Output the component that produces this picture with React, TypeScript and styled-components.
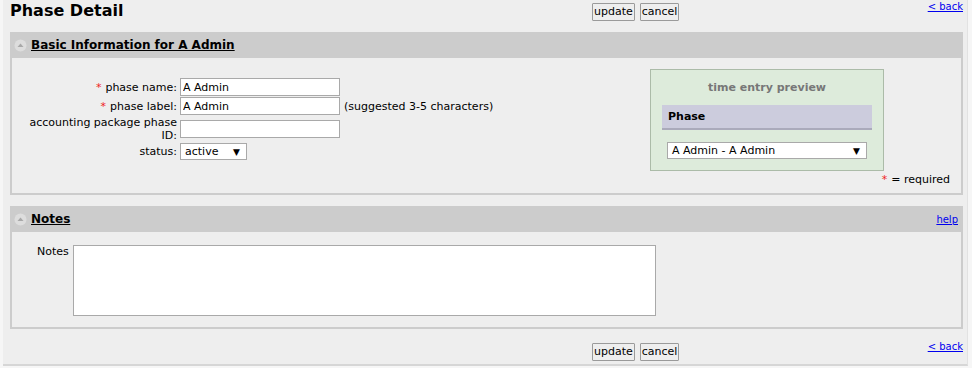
import * as React from 'react'
import styled, { createGlobalStyle } from 'styled-components'

// ___________________________________________________________________

const Global = createGlobalStyle`
  html, body {
    margin: 0;
    padding: 0;
    background: #f6f6f6;
  }
  body {
    font-family: "DejaVu Sans", Verdana, sans-serif;
    font-size: 11px;
    color: #000;
  }
`

const Page = styled.div`
  margin-left: 3px;
  width: 965px;
  height: 366px;
  box-sizing: border-box;
  background: #eeeeee;
  border-bottom: 2px solid #d6d6d6;
  border-right: 1px solid #e2e2e2;
  padding: 0 6px 0 7px;
  display: flex;
  flex-direction: column;

  & > * {
    flex-shrink: 0;
  }
`

const TopBar = styled.div`
  display: grid;
  grid-template-columns: 582px auto 1fr;
  align-items: start;
  height: 32px;
`

const Title = styled.h1`
  margin: 0;
  padding-top: 1px;
  font-size: 16px;
  font-weight: bold;
  line-height: 20px;
`

const Buttons = styled.div`
  display: flex;
  gap: 5px;
  padding-top: 3px;
`

const Button = styled.button`
  font-family: "DejaVu Sans", Verdana, sans-serif;
  font-size: 11px;
  height: 18px;
  padding: 0 1px;
  background: #eeeeee;
  border: 1px solid #9a9a9a;
  border-radius: 1px;
  color: #000;
  line-height: 14px;
`

const BackLink = styled.a`
  justify-self: end;
  margin-top: 1px;
  margin-right: -2px;
  color: #0000ee;
  text-decoration: underline;
  font-size: 10px;
  line-height: 12px;
  cursor: pointer;
`

const Section = styled.section<{ $gap?: number }>`
  margin-top: ${(p) => p.$gap ?? 0}px;
  width: 953px;
`

const SectionHeader = styled.div`
  height: 26px;
  background: #cccccc;
  display: flex;
  align-items: center;
  padding: 0 5px 0 4px;
  gap: 4px;
`

const HeaderTitle = styled.a`
  font-size: 12px;
  font-weight: bold;
  color: #000;
  text-decoration: underline;
  flex: 1;
`

const HelpLink = styled.a`
  color: #0000ee;
  text-decoration: underline;
  font-size: 10px;
`

const SectionBody = styled.div<{ $h: number }>`
  height: ${(p) => p.$h}px;
  box-sizing: border-box;
  border: 2px solid #cccccc;
  border-top: none;
  background: #eeeeee;
  display: flex;
`

const FormGrid = styled.div`
  display: grid;
  grid-template-columns: 165px 160px 1fr;
  column-gap: 3px;
  row-gap: 1px;
  align-items: center;
  justify-items: start;
  align-content: start;
  padding-top: 20px;
  flex: 1;
`

const Label = styled.label`
  justify-self: end;
  text-align: right;
  line-height: 13px;
  color: #000;
`

const Star = styled.span`
  color: #ee2222;
  margin-right: 4px;
`

const TextInput = styled.input`
  font-family: "DejaVu Sans", Verdana, sans-serif;
  font-size: 11px;
  width: 160px;
  height: 18px;
  box-sizing: border-box;
  border: 1px solid #a9a9a9;
  padding: 0 2px;
  background: #fff;
`

const Hint = styled.span`
  padding-left: 1px;
`

const FakeSelect = styled.div<{ $w: number }>`
  width: ${(p) => p.$w}px;
  height: 17px;
  box-sizing: border-box;
  border: 1px solid #a9a9a9;
  background: #fff;
  display: flex;
  align-items: center;
  justify-content: space-between;
  padding: 0 6px 0 4px;
  font-size: 11px;
`

const Arrow = styled.span`
  font-size: 9px;
`

const RightCol = styled.div`
  width: 311px;
  display: flex;
  flex-direction: column;
  align-items: flex-start;
  padding-top: 11px;
`

const Preview = styled.div`
  width: 234px;
  height: 102px;
  box-sizing: border-box;
  background: #ddebdb;
  border: 1px solid #abbba8;
  display: flex;
  flex-direction: column;
  align-items: center;
  padding-top: 11px;
`

const PreviewTitle = styled.div`
  font-weight: bold;
  color: #777777;
  font-size: 11px;
  line-height: 14px;
`

const PhaseBar = styled.div`
  margin-top: 10px;
  width: 210px;
  height: 25px;
  box-sizing: border-box;
  background: #ccccdd;
  border-bottom: 2px solid #aaaabb;
  font-weight: bold;
  font-size: 11px;
  display: flex;
  align-items: center;
  padding-left: 6px;
`

const PreviewSelect = styled(FakeSelect)`
  margin-top: 12px;
`

const Required = styled.div`
  align-self: flex-end;
  margin-right: 11px;
  margin-top: 2px;
  font-size: 11px;
`

const NotesRow = styled.div`
  display: flex;
  align-items: flex-start;
  gap: 4px;
  padding: 13px 0 0 25px;
`

const NotesArea = styled.textarea`
  width: 583px;
  height: 71px;
  box-sizing: border-box;
  border: 1px solid #a9a9a9;
  background: #fff;
  resize: none;
  margin: 0;
`

const BottomBar = styled(TopBar)`
  margin-top: 11px;
`

const CollapseIcon = () => (
  <svg width="13" height="13" viewBox="0 0 13 13">
    <circle cx="6.5" cy="6.5" r="6" fill="#dddddd" />
    <polygon points="3.5,8 6.5,4.5 9.5,8" fill="#a8a8a8" />
  </svg>
)

const App = () => (
  <>
    <Global />
    <Page>
      <TopBar>
        <Title>Phase Detail</Title>
        <Buttons>
          <Button>update</Button>
          <Button>cancel</Button>
        </Buttons>
        <BackLink>&lt; back</BackLink>
      </TopBar>

      <Section>
        <SectionHeader>
          <CollapseIcon />
          <HeaderTitle>Basic Information for A Admin</HeaderTitle>
        </SectionHeader>
        <SectionBody $h={137}>
          <FormGrid>
            <Label>
              <Star>*</Star>phase name:
            </Label>
            <TextInput defaultValue="A Admin" />
            <span />
            <Label>
              <Star>*</Star>phase label:
            </Label>
            <TextInput defaultValue="A Admin" />
            <Hint>(suggested 3-5 characters)</Hint>
            <Label>
              accounting package phase
              <br />
              ID:
            </Label>
            <TextInput />
            <span />
            <Label>status:</Label>
            <FakeSelect $w={67}>
              active <Arrow>▼</Arrow>
            </FakeSelect>
            <span />
          </FormGrid>
          <RightCol>
            <Preview>
              <PreviewTitle>time entry preview</PreviewTitle>
              <PhaseBar>Phase</PhaseBar>
              <PreviewSelect $w={200}>
                A Admin - A Admin <Arrow>▼</Arrow>
              </PreviewSelect>
            </Preview>
            <Required>
              <Star>*</Star>= required
            </Required>
          </RightCol>
        </SectionBody>
      </Section>

      <Section $gap={11}>
        <SectionHeader>
          <CollapseIcon />
          <HeaderTitle>Notes</HeaderTitle>
          <HelpLink>help</HelpLink>
        </SectionHeader>
        <SectionBody $h={97}>
          <NotesRow>
            <Label>Notes</Label>
            <NotesArea />
          </NotesRow>
        </SectionBody>
      </Section>

      <BottomBar>
        <span />
        <Buttons>
          <Button>update</Button>
          <Button>cancel</Button>
        </Buttons>
        <BackLink>&lt; back</BackLink>
      </BottomBar>
    </Page>
  </>
)

export default App
